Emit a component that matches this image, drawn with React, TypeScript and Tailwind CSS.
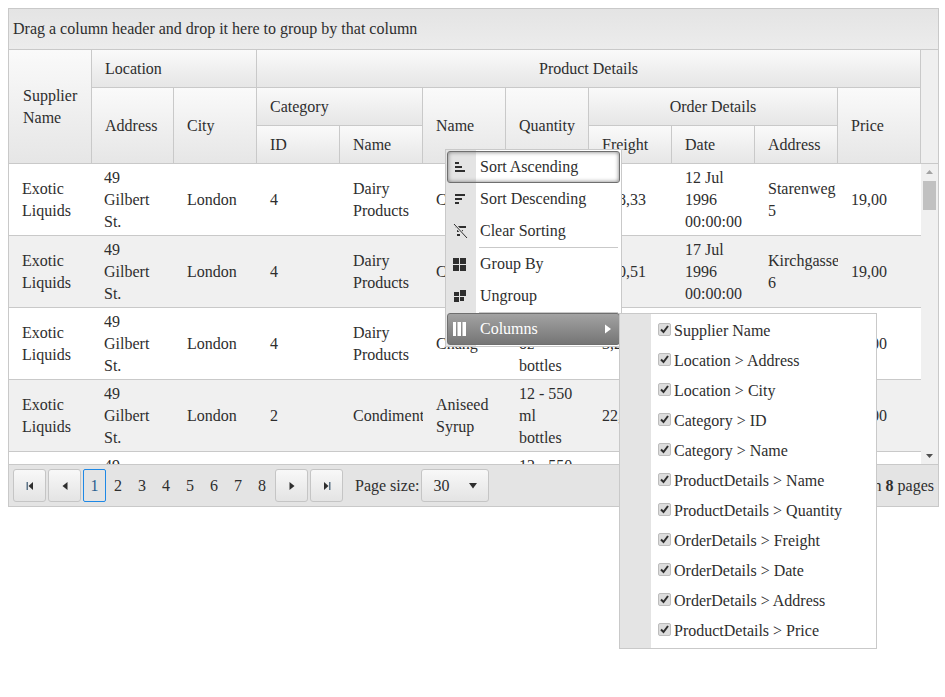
import React from 'react';

const serif = { fontFamily: '"Liberation Serif", serif' };
const colWidths = [83, 82, 83, 83, 83, 83, 83, 83, 83, 83, 83];

const rows = [
  ['Exotic Liquids', '49 Gilbert St.', 'London', '4', 'Dairy Products', 'Chai', '10 boxes x 20 bags', '148,33', '12 Jul 1996 00:00:00', 'Starenweg 5', '19,00'],
  ['Exotic Liquids', '49 Gilbert St.', 'London', '4', 'Dairy Products', 'Chai', '10 boxes x 20 bags', '140,51', '17 Jul 1996 00:00:00', 'Kirchgasse 6', '19,00'],
  ['Exotic Liquids', '49 Gilbert St.', 'London', '4', 'Dairy Products', 'Chang', '24 - 12 oz bottles', '3,25', '18 Jul 1996 00:00:00', 'Hauptstr. 31', '19,00'],
  ['Exotic Liquids', '49 Gilbert St.', 'London', '2', 'Condiments', 'Aniseed Syrup', '12 - 550 ml bottles', '22,98', '22 Jul 1996 00:00:00', 'Rua do Paco 67', '10,00'],
  ['Exotic Liquids', '49 Gilbert St.', 'London', '2', 'Condiments', 'Aniseed Syrup', '12 - 550 ml bottles', '13,97', '25 Jul 1996 00:00:00', 'Boulevard 12', '10,00'],
];

const columnItems = [
  'Supplier Name',
  'Location > Address',
  'Location > City',
  'Category > ID',
  'Category > Name',
  'ProductDetails > Name',
  'ProductDetails > Quantity',
  'OrderDetails > Freight',
  'OrderDetails > Date',
  'OrderDetails > Address',
  'ProductDetails > Price',
];

const Th: React.FC<{ colSpan?: number; rowSpan?: number; center?: boolean; first?: boolean; children: React.ReactNode }> = ({ colSpan, rowSpan, center, first, children }) => (
  <th
    colSpan={colSpan}
    rowSpan={rowSpan}
    className={`h-[38px] border-r border-b border-[#c9c9c9] bg-gradient-to-b from-[#fafafa] to-[#e6e6e6] pb-0 pr-[13px] font-normal align-middle ${first ? 'pl-[14px] pt-0' : 'pl-[13px] pt-[1px]'} ${center ? 'text-center' : 'text-left'}`}
  >
    {children}
  </th>
);

const PagerButton: React.FC<{ children: React.ReactNode }> = ({ children }) => (
  <button className="flex h-[33px] w-[33px] items-center justify-center rounded-[3px] border border-[#c5c5c5] bg-gradient-to-b from-[#f8f8f8] to-[#e4e4e4]">
    {children}
  </button>
);

const MenuItem: React.FC<{ icon: React.ReactNode; label: string; focused?: boolean }> = ({ icon, label, focused }) => (
  <div
    className={`flex h-8 items-center rounded-[3px] border ${focused ? 'border-[#6f6f6f] shadow-[inset_0_0_4px_#777777]' : 'border-transparent'}`}
  >
    <span className="flex w-[28px] pl-[5px]">{icon}</span>
    <span className="ml-[4px]">{label}</span>
  </div>
);

const Separator = () => <div className="ml-[32px] mr-[2px] h-px bg-[#c9c9c9]" />;

const Scrollbar = () => (
  <div className="flex w-[17px] flex-col items-center bg-[#f0f0f0]">
    <svg width="9" height="17" viewBox="0 0 9 17">
      <path d="M4.5 6 L8 10 L1 10 Z" fill="#a3a3a3" />
    </svg>
    <div className="h-[29px] w-[13px] bg-[#c1c1c1]" />
    <div className="flex-1" />
    <svg width="9" height="17" viewBox="0 0 9 17">
      <path d="M1 7 L8 7 L4.5 11 Z" fill="#505050" />
    </svg>
  </div>
);

const App: React.FC = () => {
  return (
    <div className="relative h-[697px] w-[945px] overflow-hidden bg-white p-2 text-[16px] leading-[22px] text-[#2e2e2e]" style={serif}>
      <div className="w-[931px] border border-[#c9c9c9]">
        {/* Group panel */}
        <div className="flex h-[41px] items-center border-b border-[#c9c9c9] bg-gradient-to-b from-[#e4e4e4] to-[#ececec] pl-1">
          Drag a column header and drop it here to group by that column
        </div>

        {/* Header */}
        <div className="flex h-[114px] bg-[#efefef]">
          <table className="w-[912px] table-fixed border-separate border-spacing-0">
            <colgroup>
              {colWidths.map((w, i) => (
                <col key={i} className={w === 82 ? 'w-[82px]' : 'w-[83px]'} />
              ))}
            </colgroup>
            <thead>
              <tr>
                <Th rowSpan={3} first>Supplier Name</Th>
                <Th colSpan={2}>Location</Th>
                <Th colSpan={8} center>Product Details</Th>
              </tr>
              <tr>
                <Th rowSpan={2}>Address</Th>
                <Th rowSpan={2}>City</Th>
                <Th colSpan={2}>Category</Th>
                <Th rowSpan={2}>Name</Th>
                <Th rowSpan={2}>Quantity</Th>
                <Th colSpan={3} center>Order Details</Th>
                <Th rowSpan={2}>Price</Th>
              </tr>
              <tr>
                <Th>ID</Th>
                <Th>Name</Th>
                <Th>Freight</Th>
                <Th>Date</Th>
                <Th>Address</Th>
              </tr>
            </thead>
          </table>
          <div className="flex-1 border-b border-[#c9c9c9]" />
        </div>

        {/* Body */}
        <div className="flex h-[300px] overflow-hidden">
          <div className="w-[912px] overflow-hidden">
            <table className="w-[912px] table-fixed border-separate border-spacing-0">
              <colgroup>
                {colWidths.map((w, i) => (
                  <col key={i} className={w === 82 ? 'w-[82px]' : 'w-[83px]'} />
                ))}
              </colgroup>
              <tbody>
                {rows.map((row, r) => (
                  <tr key={r} className={r % 2 === 1 ? 'bg-[#f0f0f0]' : 'bg-white'}>
                    {row.map((cell, c) => (
                      <td key={c} className={`h-[72px] overflow-hidden border-b border-[#c9c9c9] py-0 pr-0 align-middle ${c === 1 ? 'pl-[12px]' : 'pl-[13px]'}`}>
                        <div className="w-[57px]">{cell}</div>
                      </td>
                    ))}
                  </tr>
                ))}
              </tbody>
            </table>
          </div>
          <Scrollbar />
        </div>

        {/* Pager */}
        <div className="flex h-[42px] items-center gap-[2px] border-t border-[#c9c9c9] bg-[#e4e4e4] px-1">
          <PagerButton>
            <svg width="10" height="10" viewBox="0 0 10 10"><path d="M1.5 1h1.5v8H1.5z" fill="#5d7488" /><path d="M8 1v8L3.5 5z" fill="#2e2e2e" /></svg>
          </PagerButton>
          <PagerButton>
            <svg width="10" height="10" viewBox="0 0 10 10"><path d="M7.5 1v8L2.5 5z" fill="#2e2e2e" /></svg>
          </PagerButton>
          <div className="flex items-center">
            <span className="flex h-[33px] w-[23px] items-center justify-center rounded-[2px] border border-[#1e88e5] text-[#2a5f8f]">1</span>
            {[2, 3, 4, 5, 6, 7, 8].map((n) => (
              <span key={n} className="flex w-[24px] justify-center">
                {n}
              </span>
            ))}
          </div>
          <div className="-ml-px">
            <PagerButton>
              <svg width="10" height="10" viewBox="0 0 10 10"><path d="M2.5 1v8L7.5 5z" fill="#2e2e2e" /></svg>
            </PagerButton>
          </div>
          <PagerButton>
            <svg width="10" height="10" viewBox="0 0 10 10"><path d="M2 1v8L6.5 5z" fill="#2e2e2e" /><path d="M7 1h1.5v8H7z" fill="#5d7488" /></svg>
          </PagerButton>
          <span className="ml-[10px]">Page size:</span>
          <div className="flex h-[33px] w-[68px] items-center rounded-[3px] border border-[#c5c5c5] bg-gradient-to-b from-[#f8f8f8] to-[#e4e4e4] pl-[11px]">
            <span>30</span>
            <svg className="ml-[19px]" width="10" height="8" viewBox="0 0 10 8"><path d="M1 1h8L5 6.5z" fill="#2e2e2e" /></svg>
          </div>
          <span className="ml-auto">
            Page 1 in <b>8</b> pages
          </span>
        </div>
      </div>

      {/* Context menu */}
      <div className="absolute left-[445px] top-[149px] z-10 w-[177px] border border-[#c9c9c9] bg-[linear-gradient(to_right,#e4e4e4_30px,#ffffff_30px)] p-[1px]">
        <MenuItem
          focused
          label="Sort Ascending"
          icon={
            <svg width="14" height="14" viewBox="0 0 14 14" fill="#2e2e2e"><path d="M2 2h4v2H2zM2 6h7v2H2zM2 10h10v2H2z" /></svg>
          }
        />
        <MenuItem
          label="Sort Descending"
          icon={
            <svg width="14" height="14" viewBox="0 0 14 14" fill="#2e2e2e"><path d="M2 2h10v2H2zM2 6h7v2H2zM2 10h4v2H2z" /></svg>
          }
        />
        <MenuItem
          label="Clear Sorting"
          icon={
            <svg width="16" height="16" viewBox="0 0 16 16" fill="#2e2e2e"><path d="M2 3h11v2H2zM4 7h6v2H4zM4 11h3v2H4z" /><path d="M1 1 L14 15" stroke="#e4e4e4" strokeWidth="3" /><path d="M1 1 L14 15" stroke="#2e2e2e" strokeWidth="1" /></svg>
          }
        />
        <Separator />
        <MenuItem
          label="Group By"
          icon={
            <svg width="13" height="13" viewBox="0 0 13 13" fill="#2e2e2e"><path d="M0 0h6v6H0zM7 0h6v6H7zM0 7h6v6H0zM7 7h6v6H7z" /></svg>
          }
        />
        <MenuItem
          label="Ungroup"
          icon={
            <svg width="14" height="14" viewBox="0 0 14 14" fill="#2e2e2e"><path d="M1 3h5v4H1zM7 1h6v6H7zM1 8h5v5H1zM7 8h4v4H7z" /></svg>
          }
        />
        <Separator />
        <div className="flex h-8 items-center rounded-[3px] border border-[#6f6f6f] bg-gradient-to-b from-[#a3a3a3] to-[#757575] text-white">
          <span className="flex w-[28px] pl-[5px]">
            <svg width="13" height="14" viewBox="0 0 13 14" fill="#ffffff"><path d="M0 0h3v14H0zM4.5 0h3.5v14H4.5zM9.5 0h3.5v14H9.5z" /></svg>
          </span>
          <span className="ml-[4px]">Columns</span>
          <svg className="ml-auto mr-[7px]" width="8" height="10" viewBox="0 0 8 10"><path d="M1 0.5v9L7 5z" fill="#ffffff" /></svg>
        </div>
      </div>

      {/* Columns submenu */}
      <div className="absolute left-[619px] top-[313px] z-20 w-[258px] border border-[#c9c9c9] bg-[linear-gradient(to_right,#e4e4e4_31px,#ffffff_31px)] py-[2px]">
        {columnItems.map((label) => (
          <div key={label} className="flex h-[30px] items-center pl-[38px]">
            <span className="mr-[3px] flex h-[13px] w-[13px] -translate-y-[2px] items-center justify-center rounded-[2px] border border-[#bdbdbd] bg-[#dcdcdc]">
              <svg width="11" height="11" viewBox="0 0 11 11"><path d="M2 5.5 L4.5 8 L9 2" fill="none" stroke="#2e2e2e" strokeWidth="2" /></svg>
            </span>
            <span>{label}</span>
          </div>
        ))}
      </div>
    </div>
  );
};

export default App;
